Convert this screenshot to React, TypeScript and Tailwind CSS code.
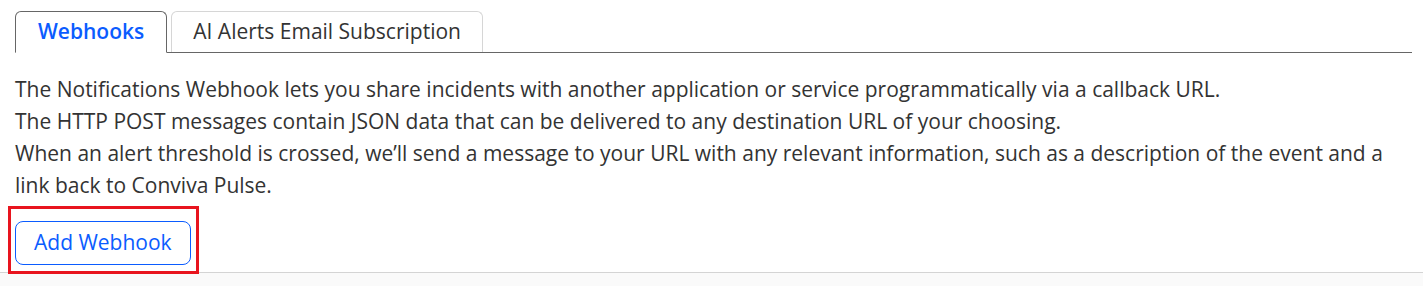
export default function App() {
  return (
    <div className="min-h-[286px] bg-white font-['Open_Sans',sans-serif] text-[#333]">
      <div className="pl-[15px] pr-[11px] pt-[11px]">
        {/* Tab strip */}
        <div className="flex items-end gap-[4px] border-b border-[#666]">
          <button className="-mb-px h-[42px] rounded-t-[6px] border border-b-white border-[#666] bg-white px-[22px] text-[21px] font-semibold text-[#0b5cff]">
            Webhooks
          </button>
          <button className="h-[41px] rounded-t-[6px] border border-b-0 border-[#d6d6d6] bg-white px-[21px] text-[21px] text-[#333]">
            AI Alerts Email Subscription
          </button>
        </div>

        <div className="mt-[20px] text-[21px] leading-[32px]">
          <p>
            The Notifications Webhook lets you share incidents with another application or service programmatically via a
            callback URL.
          </p>
          <p>The HTTP POST messages contain JSON data that can be delivered to any destination URL of your choosing.</p>
          <p>
            When an alert threshold is crossed, we’ll send a message to your URL with any relevant information, such as a
            description of the event and a link back to Conviva Pulse.
          </p>
        </div>

        <div className="relative mt-[20px] w-fit">
          <button className="h-[44px] rounded-[8px] border border-[#0b5cff] bg-white px-[18px] text-[21px] text-[#0b5cff]">
            Add Webhook
          </button>
          {/* highlight annotation */}
          <div className="pointer-events-none absolute -left-[7px] -right-[8px] -top-[15px] -bottom-[9px] border-[3px] border-[#e8141e]" />
        </div>
      </div>
      <div className="mt-[7px] h-[14px] border-t border-[#d4d4d4] bg-[#fafafa]" />
    </div>
  );
}
